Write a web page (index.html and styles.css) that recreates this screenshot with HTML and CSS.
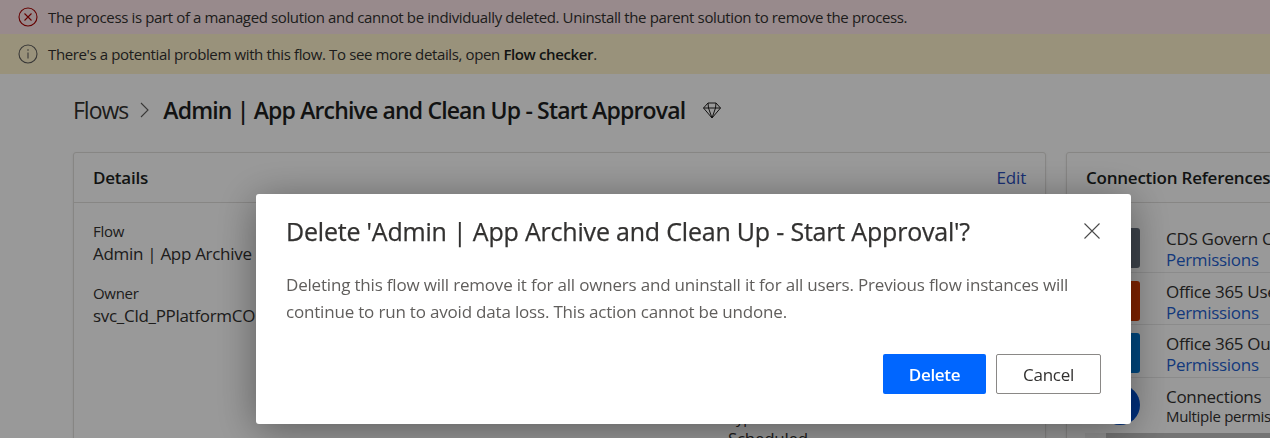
FILE: index.html
```html
<!DOCTYPE html>
<html lang="en">
<head>
<meta charset="utf-8">
<title>Flow details</title>
<link rel="stylesheet" href="styles.css">
</head>
<body>
<div class="page">
  <div class="banner banner-error">
    <svg class="banner-icon" viewBox="0 0 20 20"><circle cx="10" cy="10" r="9" fill="none" stroke="#a80000" stroke-width="1.1"/><path d="M6.500 6.500l7 7M13.500 6.500l-7 7" stroke="#a80000" stroke-width="1.1" fill="none"/></svg>
    <span>The process is part of a managed solution and cannot be individually deleted. Uninstall the parent solution to remove the process.</span>
  </div>
  <div class="banner banner-warning">
    <svg class="banner-icon" viewBox="0 0 20 20"><circle cx="10" cy="10" r="9" fill="none" stroke="#605e5c" stroke-width="1.1"/><path d="M10 8.500v6" stroke="#605e5c" stroke-width="1.1" fill="none"/><circle cx="10" cy="6" r=".8" fill="#605e5c"/></svg>
    <span>There's a potential problem with this flow. To see more details, open <b>Flow checker</b>.</span>
  </div>
  <div class="crumbs">
    <span class="crumb-root">Flows</span>
    <svg class="crumb-sep" viewBox="0 0 12 16"><path d="M3 1l7 7-7 7" fill="none" stroke="#605e5c" stroke-width="1.100"/></svg>
    <span class="crumb-current">Admin | App Archive and Clean Up - Start Approval</span>
    <svg class="crumb-gem" viewBox="0 0 20 20"><path d="M6 3h8l4.500 5L10 18 1.500 8zM1.500 8h17M6 3L6.500 8 10 18l3.500-10L14 3" fill="none" stroke="#201f1e" stroke-width="1" stroke-linejoin="round"/></svg>
  </div>
  <div class="cards">
    <section class="card card-details">
      <header class="card-head"><h2>Details</h2><a class="link-edit">Edit</a></header>
      <div class="details-body">
        <div class="details-col">
          <div class="field"><div class="field-label">Flow</div><div class="field-value">Admin | App Archive and Clean Up - Start Approval</div></div>
          <div class="field"><div class="field-label">Owner</div><div class="field-value">svc_Cld_PPlatformCOE</div></div>
        </div>
        <div class="details-col-right">
          <div class="field-label">Type</div>
          <div class="field-value">Scheduled</div>
        </div>
      </div>
    </section>
    <section class="card card-conn">
      <header class="card-head"><h2>Connection References</h2></header>
      <div class="conn-list">
        <div class="conn-row"><span class="conn-icon conn-slate"></span><div class="conn-text"><div class="conn-name">CDS Govern Connection</div><a class="conn-link">Permissions</a></div></div>
        <div class="conn-row"><span class="conn-icon conn-red"></span><div class="conn-text"><div class="conn-name">Office 365 Users</div><a class="conn-link">Permissions</a></div></div>
        <div class="conn-row"><span class="conn-icon conn-blue"></span><div class="conn-text"><div class="conn-name">Office 365 Outlook</div><a class="conn-link">Permissions</a></div></div>
        <div class="conn-row"><span class="conn-icon conn-round"></span><div class="conn-text"><div class="conn-name">Connections</div><div class="conn-sub">Multiple permissions</div></div></div>
      </div>
      <div class="conn-scroll"><span class="scroll-arrow"></span><span class="scroll-thumb"></span></div>
    </section>
  </div>
</div>
<div class="overlay"></div>
<div class="dialog" role="dialog">
  <div class="dialog-head">
    <h1>Delete 'Admin | App Archive and Clean Up - Start Approval'?</h1>
    <svg class="dialog-close" viewBox="0 0 16 16"><path d="M.5.5l15 15M15.500.5l-15 15" stroke="#4a4a4a" stroke-width="1.100" fill="none"/></svg>
  </div>
  <p class="dialog-text">Deleting this flow will remove it for all owners and uninstall it for all users. Previous flow instances will continue to run to avoid data loss. This action cannot be undone.</p>
  <div class="dialog-actions">
    <button class="btn btn-primary">Delete</button>
    <button class="btn btn-default">Cancel</button>
  </div>
</div>
</body>
</html>
```

FILE: styles.css
```css
* { box-sizing: border-box; }
html, body { margin: 0; height: 100%; overflow: hidden; }
body { font-family: "Open Sans", "Noto Sans", sans-serif; color: #201f1e; background: #fff; }
.page { width: 1270px; height: 438px; overflow: hidden; background: #fff; }
.banner { display: flex; align-items: center; gap: 10px; padding-left: 18px; font-size: 15px; letter-spacing: -.37px; color: #323130; }
.banner b { font-weight: 600; color: #201f1e; }
.banner-error { height: 34px; background: #fde7e9; }
.banner-warning { height: 40px; background: #fff4ce; }
.banner-icon { width: 20px; height: 20px; flex: none; }
.crumbs { display: flex; align-items: center; height: 78px; padding: 0 0 6px 73px; }
.crumb-root { font-size: 23px; letter-spacing: -1px; color: #323130; }
.crumb-sep { width: 12px; height: 16px; margin: 0 13px 0 10px; }
.crumb-current { font-size: 23px; font-weight: 600; letter-spacing: -.84px; }
.crumb-gem { width: 20px; height: 20px; margin-left: 17px; }
.cards { display: flex; gap: 20px; padding-left: 73px; }
.card { flex: none; height: 400px; border: 1px solid #e1dfdd; border-radius: 3px; background: #fff; box-shadow: 0 1px 3px rgba(0,0,0,.08); }
.card-details { width: 973px; }
.card-conn { width: 400px; }
.card-head { display: flex; align-items: center; justify-content: space-between; height: 50px; padding: 0 19px; border-bottom: 1px solid #e1dfdd; }
.card-head h2 { margin: 0; font-size: 17px; font-weight: 600; letter-spacing: -.23px; }
.link-edit { font-size: 17px; letter-spacing: -.2px; color: #2b4fbf; }
.details-body { display: flex; padding: 18px 19px 0; }
.details-col { flex: none; width: 635px; }
.details-col-right { flex: 1; padding-top: 186px; }
.field { margin-bottom: 17px; }
.field-label { font-size: 15px; letter-spacing: -.3px; line-height: 20px; color: #323130; }
.field .field-label { margin-bottom: 1px; }
.field-value { font-size: 17px; letter-spacing: -.3px; line-height: 24px; color: #323130; white-space: nowrap; }
.conn-list { display: flex; flex-direction: column; padding: 17px 0 0 33px; }
.conn-row { display: flex; align-items: center; gap: 26px; height: 52.500px; padding-top: 5px; border-bottom: 1px solid #e8e8e8; }
.conn-row:last-child { border-bottom: 0; padding-top: 3px; }
.conn-icon { width: 40px; height: 40px; flex: none; border-radius: 3px; }
.conn-text { padding-top: 2px; }
.conn-slate { background: #67717f; }
.conn-red { background: #d83b01; }
.conn-blue { background: #0078d4; }
.conn-round { background: #0050d0; border-radius: 50%; }
.conn-name { font-size: 17px; letter-spacing: -.3px; line-height: 21px; color: #323130; white-space: nowrap; }
.conn-link { display: block; font-size: 17px; letter-spacing: -.3px; line-height: 21px; color: #1f5fd0; }
.conn-sub { font-size: 15px; letter-spacing: -.3px; line-height: 19px; color: #323130; white-space: nowrap; }
.conn-scroll { display: flex; align-items: stretch; height: 17px; margin: 3px 0 0 18px; background: #f1f1f1; }
.scroll-arrow { width: 21px; flex: none; }
.scroll-thumb { flex: 1; background: #c1c1c1; }
.overlay { position: fixed; inset: 0; background: rgba(0,0,0,.4); }
.dialog { position: fixed; left: 256px; top: 194px; width: 875px; height: 230px; padding: 19px 30px 0; background: #fff; border-radius: 3px; box-shadow: 0 6px 40px rgba(0,0,0,.4); }
.dialog-head { display: flex; align-items: center; justify-content: space-between; height: 36px; }
.dialog-head h1 { margin: 0; font-size: 25px; font-weight: 400; letter-spacing: -.2px; color: #323130; white-space: nowrap; -webkit-text-stroke: .25px #323130; }
.dialog-close { width: 16px; height: 16px; flex: none; margin-right: 1px; }
.dialog-text { margin: 22px 0 0; width: 790px; font-size: 17px; line-height: 27px; letter-spacing: -.19px; color: #605e5c; }
.dialog-actions { display: flex; justify-content: flex-end; gap: 10px; margin-top: 29px; }
.btn { height: 40px; border-radius: 2px; font-family: inherit; font-size: 17px; letter-spacing: -.3px; cursor: pointer; }
.btn-primary { width: 103px; border: 0; background: #0066ff; color: #fff; font-weight: 600; }
.btn-default { width: 105px; border: 1px solid #8a8886; background: #fff; color: #323130; }
```
